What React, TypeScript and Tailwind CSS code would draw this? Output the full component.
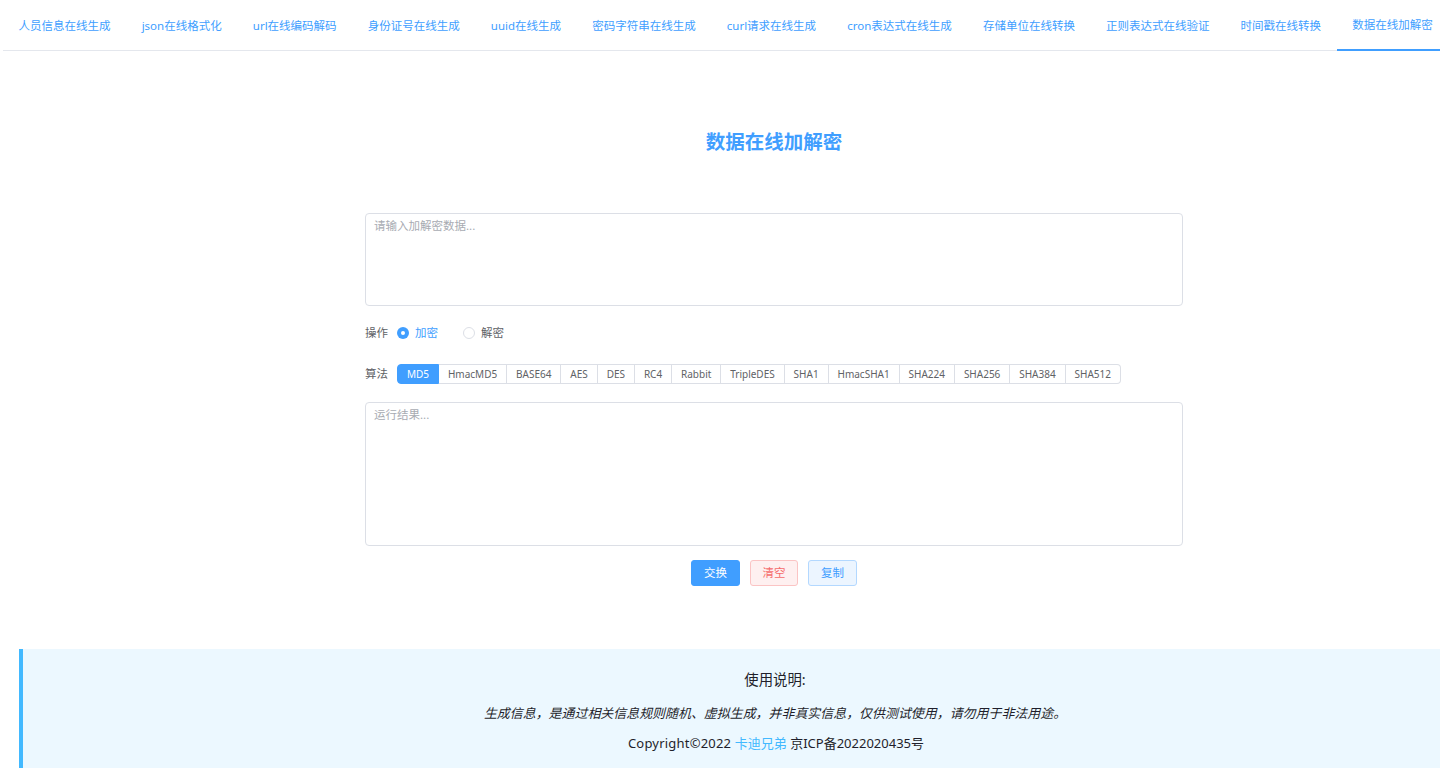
const FONT = "font-['Noto_Sans','Noto_Sans_CJK_SC',sans-serif]";

const tabs = [
  "人员信息在线生成",
  "json在线格式化",
  "url在线编码解码",
  "身份证号在线生成",
  "uuid在线生成",
  "密码字符串在线生成",
  "curl请求在线生成",
  "cron表达式在线生成",
  "存储单位在线转换",
  "正则表达式在线验证",
  "时间戳在线转换",
  "数据在线加解密",
];

const algos = ["MD5", "HmacMD5", "BASE64", "AES", "DES", "RC4", "Rabbit", "TripleDES", "SHA1", "HmacSHA1", "SHA224", "SHA256", "SHA384", "SHA512"];

export default function App() {
  return (
    <div className={`${FONT} h-[768px] w-[1440px] overflow-hidden bg-white`}>
      <nav className="ml-[3px] flex h-[51px] border-b border-[#e4e7ed]">
        {tabs.map((t, i) => (
          <div
            key={t}
            className={`flex h-[51px] shrink-0 items-center whitespace-nowrap px-[15.55px] pt-[1px] text-[11.5px] text-[#409eff] ${
              i === tabs.length - 1 ? "border-b-2 border-[#409eff]" : ""
            }`}
          >
            {t}
          </div>
        ))}
      </nav>

      <main className="ml-[365px] w-[818px]">
        <h1 className="mt-[77px] text-center text-[19.5px] font-bold leading-[28px] text-[#409eff]">数据在线加解密</h1>

        <textarea
          readOnly
          placeholder="请输入加解密数据..."
          className="mt-[57px] block h-[93px] w-full resize-none rounded border border-[#dcdfe6] px-[8px] py-[3px] text-[11.5px] leading-[18px] placeholder:text-[#a8abb2] outline-none"
        />

        <div className="mt-[18px] flex h-[18px] items-center text-[11.5px] text-[#606266]">
          <span className="w-8">操作</span>
          <span className="flex h-3 w-3 items-center justify-center rounded-full bg-[#409eff]">
            <span className="h-1 w-1 rounded-full bg-white" />
          </span>
          <span className="ml-[6px] text-[#409eff]">加密</span>
          <span className="ml-[25px] h-3 w-3 rounded-full border border-[#dcdfe6]" />
          <span className="ml-[6px]">解密</span>
        </div>

        <div className="mt-[22px] flex h-5 items-center text-[11.5px] text-[#606266]">
          <span className="w-8">算法</span>
          <div className="flex h-5">
            {algos.map((a, i) => (
              <span
                key={a}
                className={`flex h-5 items-center border-y border-r px-[8.95px] text-[10px] ${
                  i === 0
                    ? "rounded-l border-l border-[#409eff] bg-[#409eff] text-white"
                    : "border-[#dcdfe6] bg-white text-[#606266]"
                } ${i === algos.length - 1 ? "rounded-r" : ""}`}
              >
                {a}
              </span>
            ))}
          </div>
        </div>

        <textarea
          readOnly
          placeholder="运行结果..."
          className="mt-[18px] block h-[144px] w-full resize-none rounded border border-[#dcdfe6] px-[8px] py-[3px] text-[11.5px] leading-[18px] placeholder:text-[#a8abb2] outline-none"
        />

        <div className="mt-[14px] flex h-[27px] justify-center gap-[10px]">
          <button className="h-[26px] w-[48.5px] rounded-[3px] border border-[#409eff] bg-[#409eff] text-[11.5px] text-white">交换</button>
          <button className="h-[26px] w-[48.5px] rounded-[3px] border border-[#fbc4c4] bg-[#fef0f0] text-[11.5px] text-[#f56c6c]">清空</button>
          <button className="h-[26px] w-[48.5px] rounded-[3px] border border-[#b3d8ff] bg-[#ecf5ff] text-[11.5px] text-[#409eff]">复制</button>
        </div>
      </main>

      <footer className="ml-[19px] mt-[62px] h-[120px] border-l-4 border-[#42b9ff] bg-[#ecf8ff] pl-[87px] text-center text-[14.4px] text-[#1f1f2b]">
        <p className="pt-[20px] leading-[22px]">使用说明:</p>
        <p className="mt-[11px] text-[12.95px] leading-[22px] italic">生成信息，是通过相关信息规则随机、虚拟生成，并非真实信息，仅供测试使用，请勿用于非法用途。</p>
        <p className="mt-[8px] pl-[2px] text-[13px] leading-[22px]">
          <span className="tracking-[0.2px]">Copyright©2022 </span>
          <span className="text-[#42b9ff]">卡迪兄弟</span> 京ICP备2022020435号
        </p>
      </footer>
    </div>
  );
}
